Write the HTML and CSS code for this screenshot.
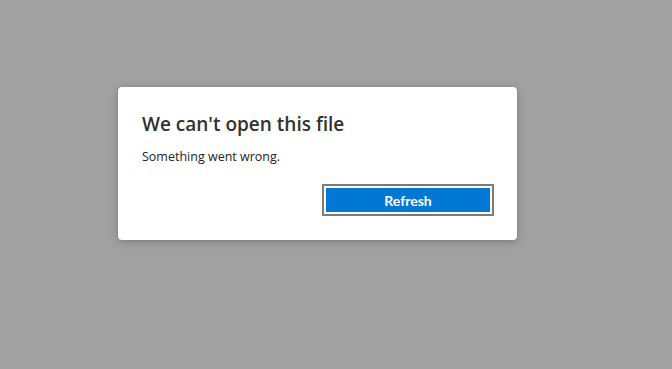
FILE: index.html
```html
<!DOCTYPE html>
<html lang="en">
<head>
<meta charset="utf-8">
<title>We can't open this file</title>
<link rel="stylesheet" href="styles.css">
</head>
<body>
<div class="overlay">
  <div class="dialog" role="dialog" aria-labelledby="dlg-title">
    <h1 class="dialog-title" id="dlg-title">We can't open this file</h1>
    <p class="dialog-text">Something went wrong.</p>
    <div class="dialog-actions">
      <button class="btn-primary" type="button">Refresh</button>
    </div>
  </div>
</div>
</body>
</html>
```
FILE: styles.css
```css
html, body {
  margin: 0;
  padding: 0;
  height: 100%;
}
body {
  background: #a1a1a1;
  font-family: "Open Sans", "Noto Sans", "Liberation Sans", sans-serif;
}
.overlay {
  padding: 87px 0 0 118px;
}
.dialog {
  width: 399px;
  box-sizing: border-box;
  background: #ffffff;
  border-radius: 4px;
  box-shadow: 0 2px 8px rgba(0, 0, 0, 0.22), 0 0 2px rgba(0, 0, 0, 0.1);
  padding: 23px 23px 24px 24px;
}
.dialog-title {
  margin: 0;
  font-size: 19px;
  line-height: 28px;
  font-weight: 600;
  color: #323130;
}
.dialog-text {
  margin: 10px 0 0;
  font-size: 12.5px;
  line-height: 18px;
  color: #252423;
}
.dialog-actions {
  display: flex;
  justify-content: flex-end;
  margin-top: 18px;
}
.btn-primary {
  width: 168px;
  height: 28px;
  margin: 2px;
  box-sizing: border-box;
  border: 2px solid #ffffff;
  background: #0078d4;
  color: #ffffff;
  font-family: "Lato", "Open Sans", sans-serif;
  font-weight: 700;
  font-size: 14px;
  padding: 0;
  outline: 2px solid #7a7a7a;
  outline-offset: 0;
  border-radius: 0;
}
```
